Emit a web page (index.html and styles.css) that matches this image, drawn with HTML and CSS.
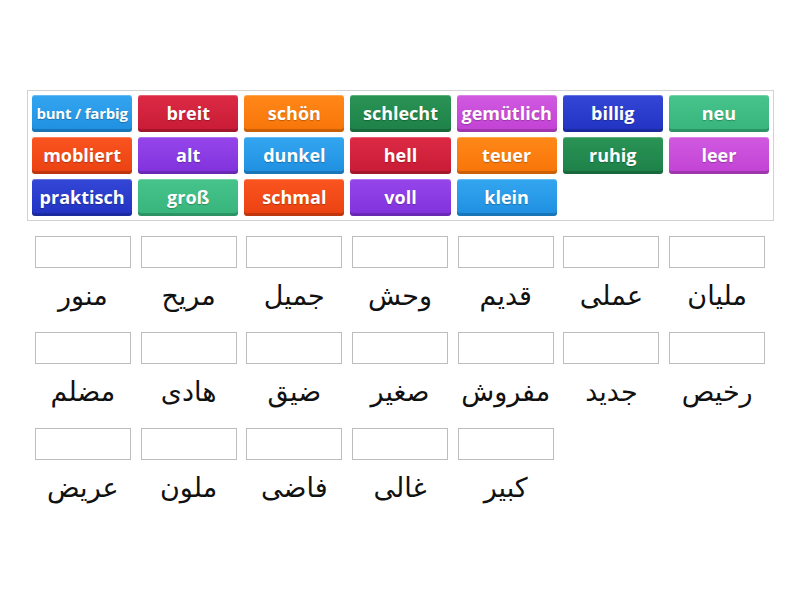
FILE: index.html
```html
<!DOCTYPE html>
<html lang="de">
<head>
<meta charset="utf-8">
<title>Match</title>
<link rel="stylesheet" href="styles.css">
</head>
<body>
<div class="page">
  <div class="bank">
    <div class="tile blue small">bunt / farbig</div>
    <div class="tile red">breit</div>
    <div class="tile orange">schön</div>
    <div class="tile dgreen">schlecht</div>
    <div class="tile magenta">gemütlich</div>
    <div class="tile dblue">billig</div>
    <div class="tile teal">neu</div>
    <div class="tile redorange">mobliert</div>
    <div class="tile purple">alt</div>
    <div class="tile blue">dunkel</div>
    <div class="tile red">hell</div>
    <div class="tile orange">teuer</div>
    <div class="tile dgreen">ruhig</div>
    <div class="tile magenta">leer</div>
    <div class="tile dblue">praktisch</div>
    <div class="tile teal">groß</div>
    <div class="tile redorange">schmal</div>
    <div class="tile purple">voll</div>
    <div class="tile blue">klein</div>
  </div>
  <div class="targets">
    <div class="slot"><div class="box"></div><div class="word" dir="rtl">منور</div></div>
    <div class="slot"><div class="box"></div><div class="word" dir="rtl">مريح</div></div>
    <div class="slot"><div class="box"></div><div class="word" dir="rtl">جميل</div></div>
    <div class="slot"><div class="box"></div><div class="word" dir="rtl">وحش</div></div>
    <div class="slot"><div class="box"></div><div class="word" dir="rtl">قديم</div></div>
    <div class="slot"><div class="box"></div><div class="word" dir="rtl">عملى</div></div>
    <div class="slot"><div class="box"></div><div class="word" dir="rtl">مليان</div></div>
    <div class="slot"><div class="box"></div><div class="word" dir="rtl">مضلم</div></div>
    <div class="slot"><div class="box"></div><div class="word" dir="rtl">هادى</div></div>
    <div class="slot"><div class="box"></div><div class="word" dir="rtl">ضيق</div></div>
    <div class="slot"><div class="box"></div><div class="word" dir="rtl">صغير</div></div>
    <div class="slot"><div class="box"></div><div class="word" dir="rtl">مفروش</div></div>
    <div class="slot"><div class="box"></div><div class="word" dir="rtl">جديد</div></div>
    <div class="slot"><div class="box"></div><div class="word" dir="rtl">رخيص</div></div>
    <div class="slot"><div class="box"></div><div class="word" dir="rtl">عريض</div></div>
    <div class="slot"><div class="box"></div><div class="word" dir="rtl">ملون</div></div>
    <div class="slot"><div class="box"></div><div class="word" dir="rtl">فاضى</div></div>
    <div class="slot"><div class="box"></div><div class="word" dir="rtl">غالى</div></div>
    <div class="slot"><div class="box"></div><div class="word" dir="rtl">كبير</div></div>
  </div>
</div>
</body>
</html>
```

FILE: styles.css
```css
html, body {
  margin: 0;
  padding: 0;
  background: #ffffff;
}

.page {
  width: 800px;
  height: 600px;
  padding: 90px 0 0 27px;
  box-sizing: border-box;
}

.bank {
  width: 747px;
  box-sizing: border-box;
  border: 1px solid #d2d2d2;
  padding: 4px;
  display: grid;
  grid-template-columns: repeat(7, 1fr);
  grid-auto-rows: 37px;
  gap: 5px 6px;
}

.tile {
  display: flex;
  align-items: center;
  justify-content: center;
  border-radius: 3px;
  color: #ffffff;
  font-family: "Open Sans", "Noto Sans", sans-serif;
  font-weight: 700;
  font-size: 18px;
  white-space: nowrap;
  padding-bottom: 2px;
  box-sizing: border-box;
  text-shadow: 0 1px 1px rgba(0, 0, 0, 0.25);
  box-shadow: inset 0 -3px 0 rgba(0, 0, 0, 0.18), inset 0 1px 0 rgba(255, 255, 255, 0.25);
}

.tile.small {
  font-size: 15px;
  letter-spacing: -0.2px;
}

.blue { background: linear-gradient(#34a6f0, #1e8fe0); }
.red { background: linear-gradient(#dc2a45, #c81b35); }
.orange { background: linear-gradient(#ff8818, #f87408); }
.dgreen { background: linear-gradient(#2a9455, #1d8048); }
.magenta { background: linear-gradient(#d05ae0, #c241d4); }
.dblue { background: linear-gradient(#3346d6, #2233c2); }
.teal { background: linear-gradient(#46c48c, #36b47c); }
.redorange { background: linear-gradient(#fa5420, #ea4110); }
.purple { background: linear-gradient(#9546ea, #8131dc); }

.targets {
  width: 740px;
  margin: 15px 0 0 3px;
  display: grid;
  grid-template-columns: repeat(7, 1fr);
  row-gap: 0;
}

.slot {
  display: flex;
  flex-direction: column;
  align-items: center;
  height: 96px;
}

.box {
  width: 96px;
  height: 32px;
  box-sizing: border-box;
  border: 1px solid #bdbdbd;
  background: #ffffff;
}

.word {
  margin-top: 10px;
  font-family: "DejaVu Sans", sans-serif;
  font-size: 27px;
  line-height: 36px;
  color: #111111;
  text-align: center;
}
```
